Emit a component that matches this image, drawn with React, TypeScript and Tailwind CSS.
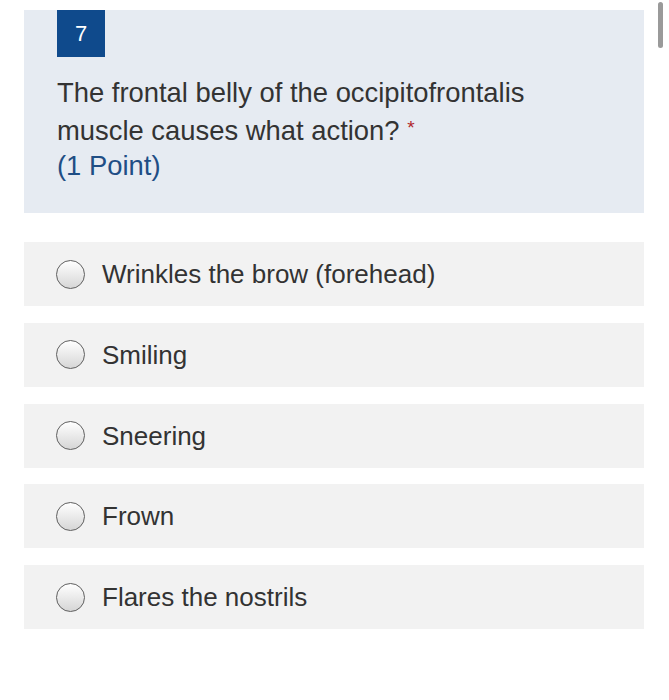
import {FC} from 'react';

const options = ['Wrinkles the brow (forehead)', 'Smiling', 'Sneering', 'Frown', 'Flares the nostrils'];

const Radio: FC = () => (
  <span className="block h-[29px] w-[29px] shrink-0 rounded-full border-[1.5px] border-[#5f5f5f] bg-gradient-to-b from-[#ffffff] to-[#d6d6d6]" />
);

const App: FC = () => (
  <div className="relative min-h-[700px] w-[669px] bg-white pt-[10px] font-['Liberation_Sans',Arial,sans-serif] text-[#333333]">
    {/* Scrollbar */}
    <div className="absolute right-[6px] top-[2px] h-[46px] w-[5px] rounded-full bg-[#9a9a9a]" />

    <div className="ml-[24px] w-[620px]">
      {/* Question card */}
      <div className="bg-[#e6ebf2] pb-[30px] pl-[33px] pr-6">
        <div className="flex h-[47px] w-[48px] items-center justify-center bg-[#0f4a8c] text-[22px] text-white">7</div>
        <div className="mt-[18px] text-[27.4px] leading-[35px]">
          <div>The frontal belly of the occipitofrontalis</div>
          <div>
            muscle causes what action? <span className="align-[6px] text-[19px] text-[#b0262c]">*</span>
          </div>
          <div className="text-[#1f4e85]">(1 Point)</div>
        </div>
      </div>

      {/* Options */}
      <div className="mt-[29px] flex flex-col gap-[16.8px]">
        {options.map(o => (
          <div className="flex h-[64px] items-center bg-[#f2f2f2] pl-[32px]" key={o}>
            <Radio />
            <span className="ml-[17px] text-[26px] leading-none text-[#333333]">{o}</span>
          </div>
        ))}
      </div>
    </div>
  </div>
);

export default App;
